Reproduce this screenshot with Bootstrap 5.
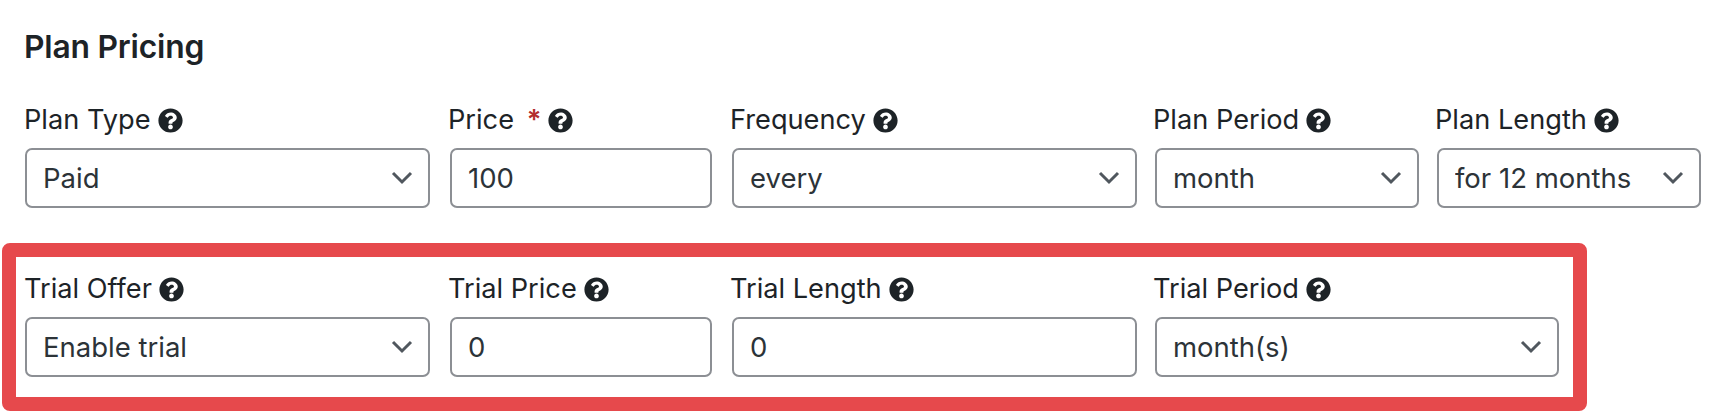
<!DOCTYPE html>
<html lang="en">
<head>
<meta charset="utf-8">
<title>Plan Pricing</title>
<link href="https://cdn.jsdelivr.net/npm/bootstrap@5.3.0/dist/css/bootstrap.min.css" rel="stylesheet">
<style>
html,body{background:#fff;overflow:hidden}
body{font-family:Inter,"Liberation Sans",sans-serif;color:#1d2327;height:412px}
.pricing-title{font-size:31.8px;font-weight:600;line-height:36px;margin:29px 0 0 24px;letter-spacing:-.2px}
.plan-row{padding-left:25px;margin-top:40px;width:1700px}
.field-row{display:grid;grid-template-columns:405px 262px 403px 262px 262px;column-gap:20px}
.field-label{display:flex;align-items:center;gap:7px;margin:0 0 13px -2px;font-size:27.2px;line-height:30px;white-space:nowrap;height:30px}
.field-row>div:first-child .field-label{margin-left:-1px}
.req{color:#b32d2e;font-weight:600;margin-left:5px;margin-right:0}
.help-ico{width:25px;height:25px;flex:none;fill:#1d2327}
.form-control.wp-ctl,.form-select.wp-ctl{height:60px;font-size:27.5px;line-height:34px;color:#2c3338;border:2px solid #8c8f94;border-radius:7px;padding:10px 16px;box-shadow:none;font-family:inherit}
.field-row>div:nth-child(n+3) .wp-ctl{width:calc(100% + 2px)}
.form-select.wp-ctl{padding-right:50px;background-size:30px 22px;background-position:right 11px center;background-image:url("data:image/svg+xml,%3csvg xmlns='http://www.w3.org/2000/svg' viewBox='0 0 30 22'%3e%3cpath fill='none' stroke='%2350575e' stroke-width='3' d='M6 6l9 9 9-9'/%3e%3c/svg%3e")}
.trial-box{margin:35px 0 0 2px;width:1585px;height:168px;border:14px solid #e6494c;border-radius:8px;padding:17px 0 0 9px}
.trial-box .field-row{grid-template-columns:405px 262px 403px 402px}
</style>
</head>
<body>
<svg width="0" height="0" class="d-block" aria-hidden="true"><defs>
<symbol id="q" viewBox="0 0 512 512"><path d="M504 256c0 137-111 248-248 248S8 393 8 256 119 8 256 8s248 111 248 248zM263 90c-54 0-89 23-116 64-4 5-3 12 3 16l35 26c5 4 13 3 17-2 18-23 30-36 58-36 21 0 47 13 47 34 0 15-13 23-34 35-25 14-57 31-57 74v12c0 7 5 12 12 12h56c7 0 12-5 12-12v-7c0-30 88-31 88-112 0-61-64-104-121-104zm-7 250c-27 0-48 22-48 48s21 48 48 48 48-22 48-48-21-48-48-48z"/></symbol>
</defs></svg>
<h1 class="pricing-title">Plan Pricing</h1>
<div class="plan-row">
  <div class="field-row">
    <div><label class="field-label">Plan Type <svg class="help-ico"><use href="#q"/></svg></label>
      <select class="form-select wp-ctl"><option>Paid</option></select></div>
    <div><label class="field-label"><span>Price <span class="req">*</span></span> <svg class="help-ico"><use href="#q"/></svg></label>
      <input class="form-control wp-ctl" value="100"></div>
    <div><label class="field-label">Frequency <svg class="help-ico"><use href="#q"/></svg></label>
      <select class="form-select wp-ctl"><option>every</option></select></div>
    <div><label class="field-label">Plan Period <svg class="help-ico"><use href="#q"/></svg></label>
      <select class="form-select wp-ctl"><option>month</option></select></div>
    <div><label class="field-label">Plan Length <svg class="help-ico"><use href="#q"/></svg></label>
      <select class="form-select wp-ctl"><option>for 12 months</option></select></div>
  </div>
</div>
<div class="trial-box">
  <div class="field-row">
    <div><label class="field-label">Trial Offer <svg class="help-ico"><use href="#q"/></svg></label>
      <select class="form-select wp-ctl"><option>Enable trial</option></select></div>
    <div><label class="field-label">Trial Price <svg class="help-ico"><use href="#q"/></svg></label>
      <input class="form-control wp-ctl" value="0"></div>
    <div><label class="field-label">Trial Length <svg class="help-ico"><use href="#q"/></svg></label>
      <input class="form-control wp-ctl" value="0"></div>
    <div><label class="field-label">Trial Period <svg class="help-ico"><use href="#q"/></svg></label>
      <select class="form-select wp-ctl"><option>month(s)</option></select></div>
  </div>
</div>
<script src="https://cdn.jsdelivr.net/npm/bootstrap@5.3.0/dist/js/bootstrap.bundle.min.js"></script>
</body>
</html>
